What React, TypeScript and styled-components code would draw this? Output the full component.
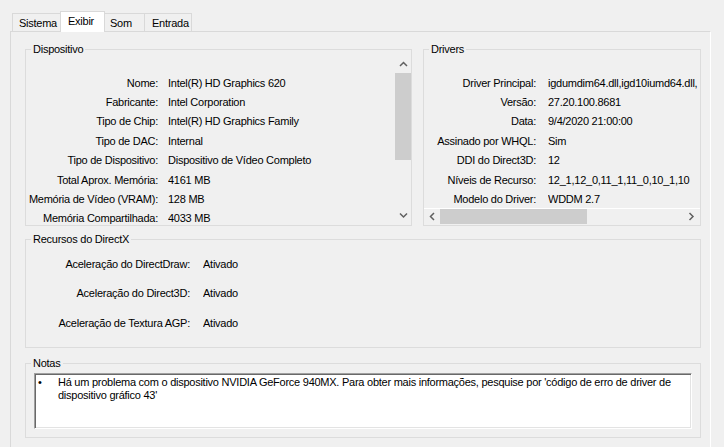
import React from 'react';
import styled, { createGlobalStyle } from 'styled-components';

const Global = createGlobalStyle`
  html, body { margin: 0; padding: 0; background: #f0f0f0; }
  body {
    font-family: "Liberation Sans", Arial, sans-serif;
    font-size: 11px;
    letter-spacing: -0.25px;
    color: #000;
  }
`;

const Window = styled.div`
  width: 724px;
  height: 447px;
  box-sizing: border-box;
  overflow: hidden;
  padding: 11px 13px 0 10px;
  display: flex;
  flex-direction: column;
`;

const TabBar = styled.div`
  display: flex;
  align-items: flex-end;
  height: 20px;
  padding-left: 2px;
  position: relative;
  z-index: 1;
`;

const Tab = styled.div<{ $active?: boolean; $w: number; $pl: number }>`
  box-sizing: border-box;
  width: ${p => p.$w}px;
  height: ${p => (p.$active ? 21 : 18)}px;
  margin-right: -1px;
  margin-bottom: ${p => (p.$active ? -1 : 0)}px;
  padding: 2px 0 0 ${p => p.$pl}px;
  line-height: 14px;
  border: 1px solid #d9d9d9;
  border-bottom: none;
  background: ${p => (p.$active ? '#ffffff' : '#f0f0f0')};
  position: relative;
  z-index: ${p => (p.$active ? 2 : 1)};
  white-space: nowrap;
`;

const TabPage = styled.div`
  flex: 1;
  box-sizing: border-box;
  border-top: 1px solid #d9d9d9;
  border-left: 1px solid #d9d9d9;
  border-right: 1px solid #ffffff;
  padding: 11px 9px 0 14px;
  display: flex;
  flex-direction: column;
`;

const TopRow = styled.div`
  display: flex;
  gap: 11px;
`;

const Group = styled.fieldset<{ $w?: number; $h: number; $mt?: number }>`
  margin: ${p => p.$mt ?? 0}px 0 0 0;
  padding: 0;
  min-width: 0;
  box-sizing: border-box;
  border: 1px solid #dcdcdc;
  width: ${p => (p.$w ? `${p.$w}px` : 'auto')};
  height: ${p => p.$h}px;
`;

const Legend = styled.legend`
  padding: 0 2px;
  margin-left: 5px;
  line-height: 13px;
  font-size: 11px;
`;

const VPane = styled.div`
  display: flex;
  height: 168px;
`;

const PaneBody = styled.div`
  flex: 1;
  min-width: 0;
  overflow: hidden;
`;

const InfoGrid = styled.div<{ $label: number; $gap: number }>`
  display: grid;
  grid-template-columns: ${p => p.$label}px 1fr;
  column-gap: ${p => p.$gap}px;
  grid-auto-rows: 19.4px;
  align-items: center;
  padding-top: 17px;
`;

const Label = styled.div`
  text-align: right;
  white-space: nowrap;
`;

const Value = styled.div`
  white-space: nowrap;
  overflow: hidden;
`;

const VScroll = styled.div`
  width: 16px;
  display: flex;
  flex-direction: column;
  background: #f0f0f0;
`;

const ScrollButton = styled.div<{ $w: number; $h: number }>`
  width: ${p => p.$w}px;
  height: ${p => p.$h}px;
  flex: none;
  display: flex;
  align-items: center;
  justify-content: center;
`;

const VThumbTrack = styled.div`
  flex: 1;
`;

const VThumb = styled.div`
  height: 87px;
  background: #cdcdcd;
`;

const HPane = styled.div`
  display: flex;
  flex-direction: column;
  height: 168px;
`;

const HScroll = styled.div`
  height: 16px;
  display: flex;
  align-items: stretch;
  background: #f0f0f0;
  box-shadow: inset 0 1px #ffffff;
`;

const HTrack = styled.div`
  flex: 1;
  padding-top: 1px;
`;

const HThumb = styled.div`
  width: 147px;
  height: 15px;
  background: #cdcdcd;
`;

const ResourceGrid = styled.div`
  display: grid;
  grid-template-columns: 164px 1fr;
  column-gap: 13px;
  row-gap: 16.5px;
  grid-auto-rows: 13px;
  align-items: center;
  padding-top: 11px;
`;

const NotesBox = styled.div`
  margin: 3px 8px 0 8px;
  height: 56px;
  box-sizing: border-box;
  background: #ffffff;
  border: 1px solid;
  border-color: #a0a0a0 #ffffff #ffffff #a0a0a0;
  box-shadow: inset 1px 1px #696969, inset -1px -1px #e3e3e3;
  padding: 2px 6px 0 1px;
  line-height: 13px;
`;

const NoteItem = styled.div`
  display: flex;
`;

const Bullet = styled.span`
  flex: none;
  width: 22px;
  padding-left: 2px;
  box-sizing: border-box;
`;

type Dir = 'up' | 'down' | 'left' | 'right';
const Chevron = ({ dir }: { dir: Dir }) => {
  const paths: Record<Dir, string> = {
    up: 'M1 5 L4.5 1.5 L8 5',
    down: 'M1 1.5 L4.5 5 L8 1.5',
    left: 'M5 1 L1.5 4.5 L5 8',
    right: 'M1.5 1 L5 4.5 L1.5 8',
  };
  const vertical = dir === 'up' || dir === 'down';
  return (
    <svg
      width={vertical ? 9 : 7}
      height={vertical ? 7 : 9}
      viewBox={vertical ? '0 0 9 7' : '0 0 7 9'}
    >
      <path d={paths[dir]} fill="none" stroke="#606060" strokeWidth="1.5" />
    </svg>
  );
};

const device: [string, string][] = [
  ['Nome:', 'Intel(R) HD Graphics 620'],
  ['Fabricante:', 'Intel Corporation'],
  ['Tipo de Chip:', 'Intel(R) HD Graphics Family'],
  ['Tipo de DAC:', 'Internal'],
  ['Tipo de Dispositivo:', 'Dispositivo de Vídeo Completo'],
  ['Total Aprox. Memória:', '4161 MB'],
  ['Memória de Vídeo (VRAM):', '128 MB'],
  ['Memória Compartilhada:', '4033 MB'],
];

const drivers: [string, string][] = [
  ['Driver Principal:', 'igdumdim64.dll,igd10iumd64.dll,'],
  ['Versão:', '27.20.100.8681'],
  ['Data:', '9/4/2020 21:00:00'],
  ['Assinado por WHQL:', 'Sim'],
  ['DDI do Direct3D:', '12'],
  ['Níveis de Recurso:', '12_1,12_0,11_1,11_0,10_1,10'],
  ['Modelo do Driver:', 'WDDM 2.7'],
];

const resources: [string, string][] = [
  ['Aceleração do DirectDraw:', 'Ativado'],
  ['Aceleração do Direct3D:', 'Ativado'],
  ['Aceleração de Textura AGP:', 'Ativado'],
];

export default function App() {
  return (
    <>
      <Global />
      <Window>
        <TabBar>
          <Tab $w={49} $pl={6}>Sistema</Tab>
          <Tab $w={45} $pl={7} $active>Exibir</Tab>
          <Tab $w={41} $pl={5}>Som</Tab>
          <Tab $w={48} $pl={7}>Entrada</Tab>
        </TabBar>
        <TabPage>
          <TopRow>
            <Group $w={387} $h={183}>
              <Legend>Dispositivo</Legend>
              <VPane>
                <PaneBody>
                  <InfoGrid $label={132} $gap={10}>
                    {device.map(([l, v]) => (
                      <React.Fragment key={l}>
                        <Label>{l}</Label>
                        <Value>{v}</Value>
                      </React.Fragment>
                    ))}
                  </InfoGrid>
                </PaneBody>
                <VScroll>
                  <ScrollButton $w={16} $h={17}>
                    <Chevron dir="up" />
                  </ScrollButton>
                  <VThumbTrack>
                    <VThumb />
                  </VThumbTrack>
                  <ScrollButton $w={16} $h={17}>
                    <Chevron dir="down" />
                  </ScrollButton>
                </VScroll>
              </VPane>
            </Group>
            <Group $w={278} $h={183}>
              <Legend>Drivers</Legend>
              <HPane>
                <PaneBody>
                  <InfoGrid $label={112} $gap={12}>
                    {drivers.map(([l, v]) => (
                      <React.Fragment key={l}>
                        <Label>{l}</Label>
                        <Value>{v}</Value>
                      </React.Fragment>
                    ))}
                  </InfoGrid>
                </PaneBody>
                <HScroll>
                  <ScrollButton $w={16} $h={16}>
                    <Chevron dir="left" />
                  </ScrollButton>
                  <HTrack>
                    <HThumb />
                  </HTrack>
                  <ScrollButton $w={17} $h={16}>
                    <Chevron dir="right" />
                  </ScrollButton>
                </HScroll>
              </HPane>
            </Group>
          </TopRow>
          <Group $h={115} $mt={7}>
            <Legend>Recursos do DirectX</Legend>
            <ResourceGrid>
              {resources.map(([l, v]) => (
                <React.Fragment key={l}>
                  <Label>{l}</Label>
                  <Value>{v}</Value>
                </React.Fragment>
              ))}
            </ResourceGrid>
          </Group>
          <Group $h={81} $mt={9}>
            <Legend>Notas</Legend>
            <NotesBox>
              <NoteItem>
                <Bullet>•</Bullet>
                <span>
                  Há um problema com o dispositivo NVIDIA GeForce 940MX. Para obter mais
                  informações, pesquise por 'código de erro de driver de dispositivo gráfico 43'
                </span>
              </NoteItem>
            </NotesBox>
          </Group>
        </TabPage>
      </Window>
    </>
  );
}
